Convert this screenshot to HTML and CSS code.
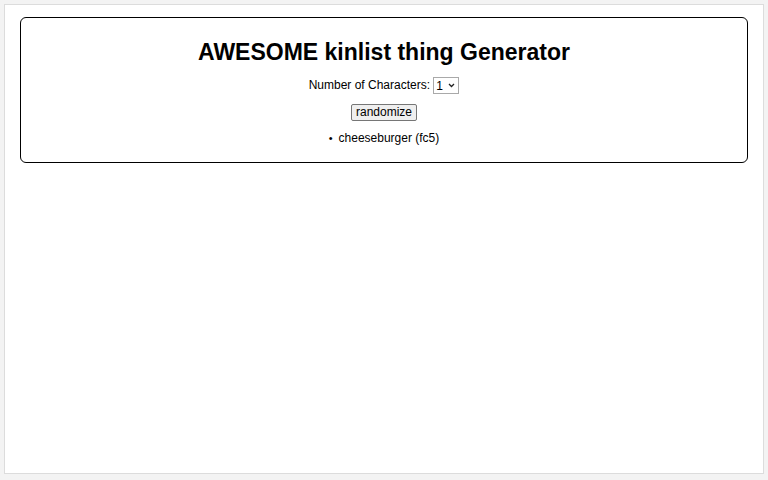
FILE: index.html
```html
<!DOCTYPE html>
<html lang="en">
<head>
<meta charset="UTF-8">
<meta name="viewport" content="width=device-width, initial-scale=1.0">
<title>AWESOME kinlist thing Generator</title>
<link rel="stylesheet" href="styles.css">
</head>
<body>
<div class="page">
  <div class="generator">
    <h1>AWESOME kinlist thing Generator</h1>
    <div class="row">
      <label for="count">Number of Characters:</label>
      <span class="select-wrap">
        <select id="count">
          <option>1</option>
          <option>2</option>
          <option>3</option>
          <option>4</option>
          <option>5</option>
        </select>
        <svg class="chevron" width="7" height="5" viewBox="0 0 7 5"><path d="M1 1 L3.5 3.5 L6 1" fill="none" stroke="#222" stroke-width="1.3"/></svg>
      </span>
    </div>
    <div class="row">
      <button id="randomize">randomize</button>
    </div>
    <ul class="results" id="results">
      <li>cheeseburger (fc5)</li>
    </ul>
  </div>
</div>
</body>
</html>
```

FILE: styles.css
```css
body {margin: 0; padding: 4px; background: #f3f3f3; font-family: "Liberation Sans", Arial, sans-serif; font-size: 12px; color: #000;}
.page {background: white; border: 1px solid #dcdcdc; height: 470px; box-sizing: border-box; padding: 12px 15px;}

.generator {
  border: 1px solid #000;
  border-radius: 6px;
  text-align: center;
  padding: 21px 10px 16px;
}
.generator h1 {font-size: 23px; margin: 0 0 12px; line-height: 26px;}
.row {margin-bottom: 9px; line-height: 17px;}
.row + .row {margin-top: 9px;}

.select-wrap {position: relative; display: inline-block; vertical-align: middle;}
select {
  appearance: none;
  -webkit-appearance: none;
  font-family: inherit;
  font-size: 12px;
  height: 17px;
  width: 26px;
  padding: 0 0 0 2px;
  border: 1px solid #a9a9a9;
  border-radius: 0;
  background: white;
  color: #000;
  display: block;
}
.chevron {position: absolute; right: 4px; top: 6px; pointer-events: none;}

button {
  font-family: inherit;
  font-size: 12px;
  height: 17px;
  padding: 0 4px;
  line-height: 15px;
  border: 1px solid #767676;
  border-radius: 2px;
  background: #efefef;
  color: #000;
  vertical-align: middle;
}
.results {margin: 0; padding: 0; list-style: none; line-height: 16px;}
.results li::before {content: "\2022"; font-size: 11px; margin-right: 6px;}
```
